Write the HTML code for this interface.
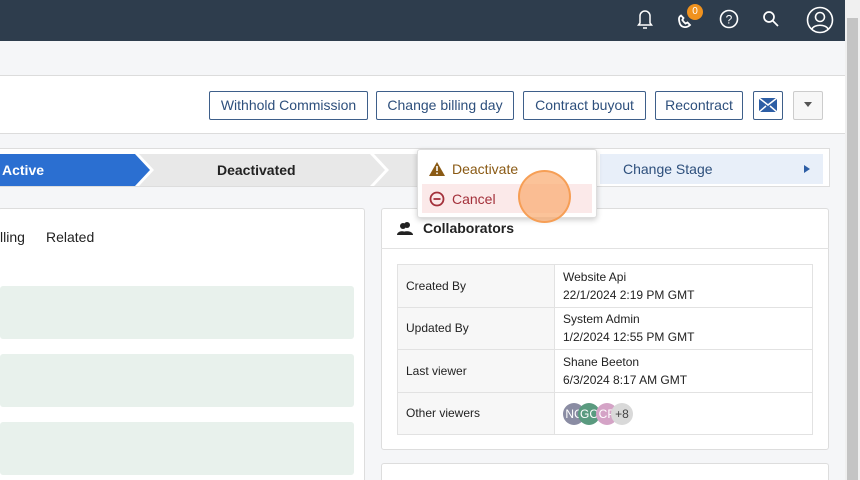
<!DOCTYPE html><html style="width:860px;height:480px;overflow:hidden"><head><style>
*{box-sizing:border-box;margin:0;padding:0}
body{width:860px;height:480px;overflow:hidden;background:#f5f6f8;font-family:"Liberation Sans",sans-serif;font-size:13px;color:#222;position:relative}
.a{position:absolute}
.top{left:0;top:0;width:845px;height:41px;background:#2e3d4d}
.sb{left:845px;top:0;width:15px;height:480px;background:#f0f0f0}
.btn{position:absolute;top:91px;height:29px;border:1px solid #3e5f8a;background:#fff;color:#2d4f7c;font-size:14px;line-height:27px;text-align:center;border-radius:2px}
.tbl{left:397px;top:264px;width:416px;border-collapse:collapse;font-size:12px}
.tbl td{border:1px solid #e2e2e2;padding:0 8px;height:42.5px}
.tbl td:first-child{background:#f7f7f7;width:157px}
.av{position:absolute;top:403px;width:22px;height:22px;border-radius:50%;color:#fff;font-size:12px;line-height:22px;text-align:center;overflow:hidden}
</style></head><body>
<div class="a top"></div>
<div class="a sb"><div class="a" style="left:2px;top:18px;width:11px;height:462px;background:#c4c4c4"></div></div>
<svg class="a" style="left:636px;top:8px" width="18" height="22" viewBox="0 0 18 22" fill="none" stroke="#fff" stroke-width="1.5"><path d="M4 15V8a5 5 0 0110 0v7l1.5 2h-13z"/><path d="M7 20h4"/></svg>
<svg class="a" style="left:677px;top:8px" width="22" height="22" viewBox="0 0 22 22" fill="none" stroke="#fff" stroke-width="1.8"><path d="M3 16c2 4 7 4 10 1l-2.5-2.5-2 1c-1.2-1-2.3-2.2-3.2-3.5l1.2-2-2.5-2.5c-2.5 1.5-2.5 4-1 8.5z"/></svg>
<div class="a" style="left:687px;top:4px;width:16px;height:16px;border-radius:50%;background:#f0921e;color:#fff;font-size:10px;line-height:16px;text-align:center">0</div>
<svg class="a" style="left:719px;top:9px" width="20" height="20" viewBox="0 0 20 20" fill="none" stroke="#fff" stroke-width="1.6"><circle cx="10" cy="10" r="8.5"/><text x="10" y="14.5" font-size="12" fill="#fff" stroke="none" text-anchor="middle" font-family="Liberation Sans">?</text></svg>
<svg class="a" style="left:762px;top:10px" width="18" height="18" viewBox="0 0 18 18" fill="none" stroke="#fff" stroke-width="1.7"><circle cx="7" cy="7" r="5"/><path d="M11 11l5 5"/></svg>
<svg class="a" style="left:806px;top:6px" width="28" height="28" viewBox="0 0 28 28" fill="none" stroke="#fff" stroke-width="1.6"><circle cx="14" cy="14" r="12.5"/><circle cx="14" cy="11" r="4.5"/><path d="M6 23c2-5 14-5 16 0"/></svg>
<div class="a" style="left:0;top:75px;width:845px;height:59px;background:#fff;border-top:1px solid #dcdcdc;border-bottom:1px solid #dcdcdc"></div>
<div class="btn" style="left:209px;width:159px">Withhold Commission</div>
<div class="btn" style="left:376px;width:138px">Change billing day</div>
<div class="btn" style="left:523px;width:123px">Contract buyout</div>
<div class="btn" style="left:655px;width:88px">Recontract</div>
<div class="btn" style="left:753px;width:30px"><svg width="18" height="14" viewBox="0 0 18 14" style="margin-top:6px"><rect width="18" height="14" fill="#2d5ea5"/><path d="M0 0l9 7 9-7M0 14l7-6M18 14l-7-6" stroke="#fff" stroke-width="1.5" fill="none"/></svg></div>
<div class="btn" style="left:793px;width:30px;border-color:#ccc;background:#f7f7f7"><span style="display:inline-block;border:4px solid transparent;border-top:5px solid #555;margin-top:10px"></span></div>
<div class="a" style="left:0;top:148px;width:830px;height:39px;background:#fff;border:1px solid #ddd;border-left:none"></div>
<svg class="a" style="left:0;top:154px" width="420" height="32"><polygon points="0,0 135,0 150,16 135,32 0,32" fill="#2b6fd1"/><polygon points="139,0 370,0 385,16 370,32 139,32 154,16" fill="#e8e8e8"/><polygon points="374,0 420,0 420,32 374,32 389,16" fill="#e8e8e8"/></svg>
<div class="a" style="left:2px;top:162px;color:#fff;font-weight:bold;font-size:14px">Active</div>
<div class="a" style="left:217px;top:162px;font-weight:bold;font-size:14px;color:#222">Deactivated</div>
<div class="a" style="left:600px;top:154px;width:223px;height:30px;background:#e8eff9;color:#2d4f7c;font-size:14px;line-height:30px;padding-left:23px">Change Stage<span style="position:absolute;right:13px;top:11px;border:4px solid transparent;border-left:6px solid #2d5ea5;border-right:0"></span></div>
<div class="a" style="left:-2px;top:208px;width:367px;height:272px;background:#fff;border:1px solid #ddd;border-bottom:none;border-radius:3px 3px 0 0"></div>
<div class="a" style="left:0;top:229px;font-size:14px">lling</div>
<div class="a" style="left:46px;top:229px;font-size:14px">Related</div>
<div class="a" style="left:0;top:286px;width:354px;height:53px;background:#e8f1ec;border-radius:3px"></div>
<div class="a" style="left:0;top:354px;width:354px;height:53px;background:#e8f1ec;border-radius:3px"></div>
<div class="a" style="left:0;top:422px;width:354px;height:53px;background:#e8f1ec;border-radius:3px"></div>
<div class="a" style="left:381px;top:208px;width:448px;height:242px;background:#fff;border:1px solid #ddd;border-radius:3px"></div>
<div class="a" style="left:381px;top:248px;width:448px;height:1px;background:#e2e2e2"></div>
<svg class="a" style="left:397px;top:221px" width="16" height="14" viewBox="0 0 16 14" fill="#222"><circle cx="10" cy="4" r="3"/><path d="M4 14c0-5 12-5 12 0z"/><circle cx="6" cy="5" r="3"/><path d="M0 14c0-5 10-5 10 0z"/></svg>
<div class="a" style="left:423px;top:220px;font-weight:bold;font-size:14px">Collaborators</div>
<table class="a tbl">
<tr><td>Created By</td><td style="line-height:18px">Website Api<br>22/1/2024 2:19 PM GMT</td></tr>
<tr><td>Updated By</td><td style="line-height:18px">System Admin<br>1/2/2024 12:55 PM GMT</td></tr>
<tr><td>Last viewer</td><td style="line-height:18px">Shane Beeton<br>6/3/2024 8:17 AM GMT</td></tr>
<tr><td>Other viewers</td><td></td></tr>
</table>
<div class="av" style="left:563px;background:#8a8ca3">NC</div>
<div class="av" style="left:578px;background:#5a9a7f">GC</div>
<div class="av" style="left:596px;background:#d4a3c6">CP</div>
<div class="av" style="left:611px;background:#d9d9d9;color:#444">+8</div>
<div class="a" style="left:381px;top:463px;width:448px;height:17px;background:#fff;border:1px solid #ddd;border-bottom:none;border-radius:3px 3px 0 0"></div>
<div class="a" style="left:417px;top:149px;width:180px;height:69px;background:#fff;border:1px solid #ddd;border-radius:3px;box-shadow:0 2px 6px rgba(0,0,0,.2)"></div>
<svg class="a" style="left:429px;top:162px" width="16" height="14" viewBox="0 0 16 14"><polygon points="8,0 16,14 0,14" fill="#8a5a14"/><rect x="7.2" y="4" width="1.6" height="5" fill="#fff"/><rect x="7.2" y="10.5" width="1.6" height="1.6" fill="#fff"/></svg>
<div class="a" style="left:452px;top:161px;color:#8a5a14;font-size:14px">Deactivate</div>
<div class="a" style="left:422px;top:184px;width:170px;height:29px;background:#fbe9e9"></div>
<svg class="a" style="left:429px;top:191px" width="16" height="16" viewBox="0 0 16 16" fill="none" stroke="#a3303a" stroke-width="1.8"><circle cx="8" cy="8" r="6.5"/><path d="M4.5 8h7"/></svg>
<div class="a" style="left:452px;top:191px;color:#a3303a;font-size:14px">Cancel</div>
<div class="a" style="left:518px;top:170px;width:53px;height:53px;border-radius:50%;background:rgba(250,170,110,.7);border:2px solid rgba(245,150,70,.8)"></div>
</body></html>
